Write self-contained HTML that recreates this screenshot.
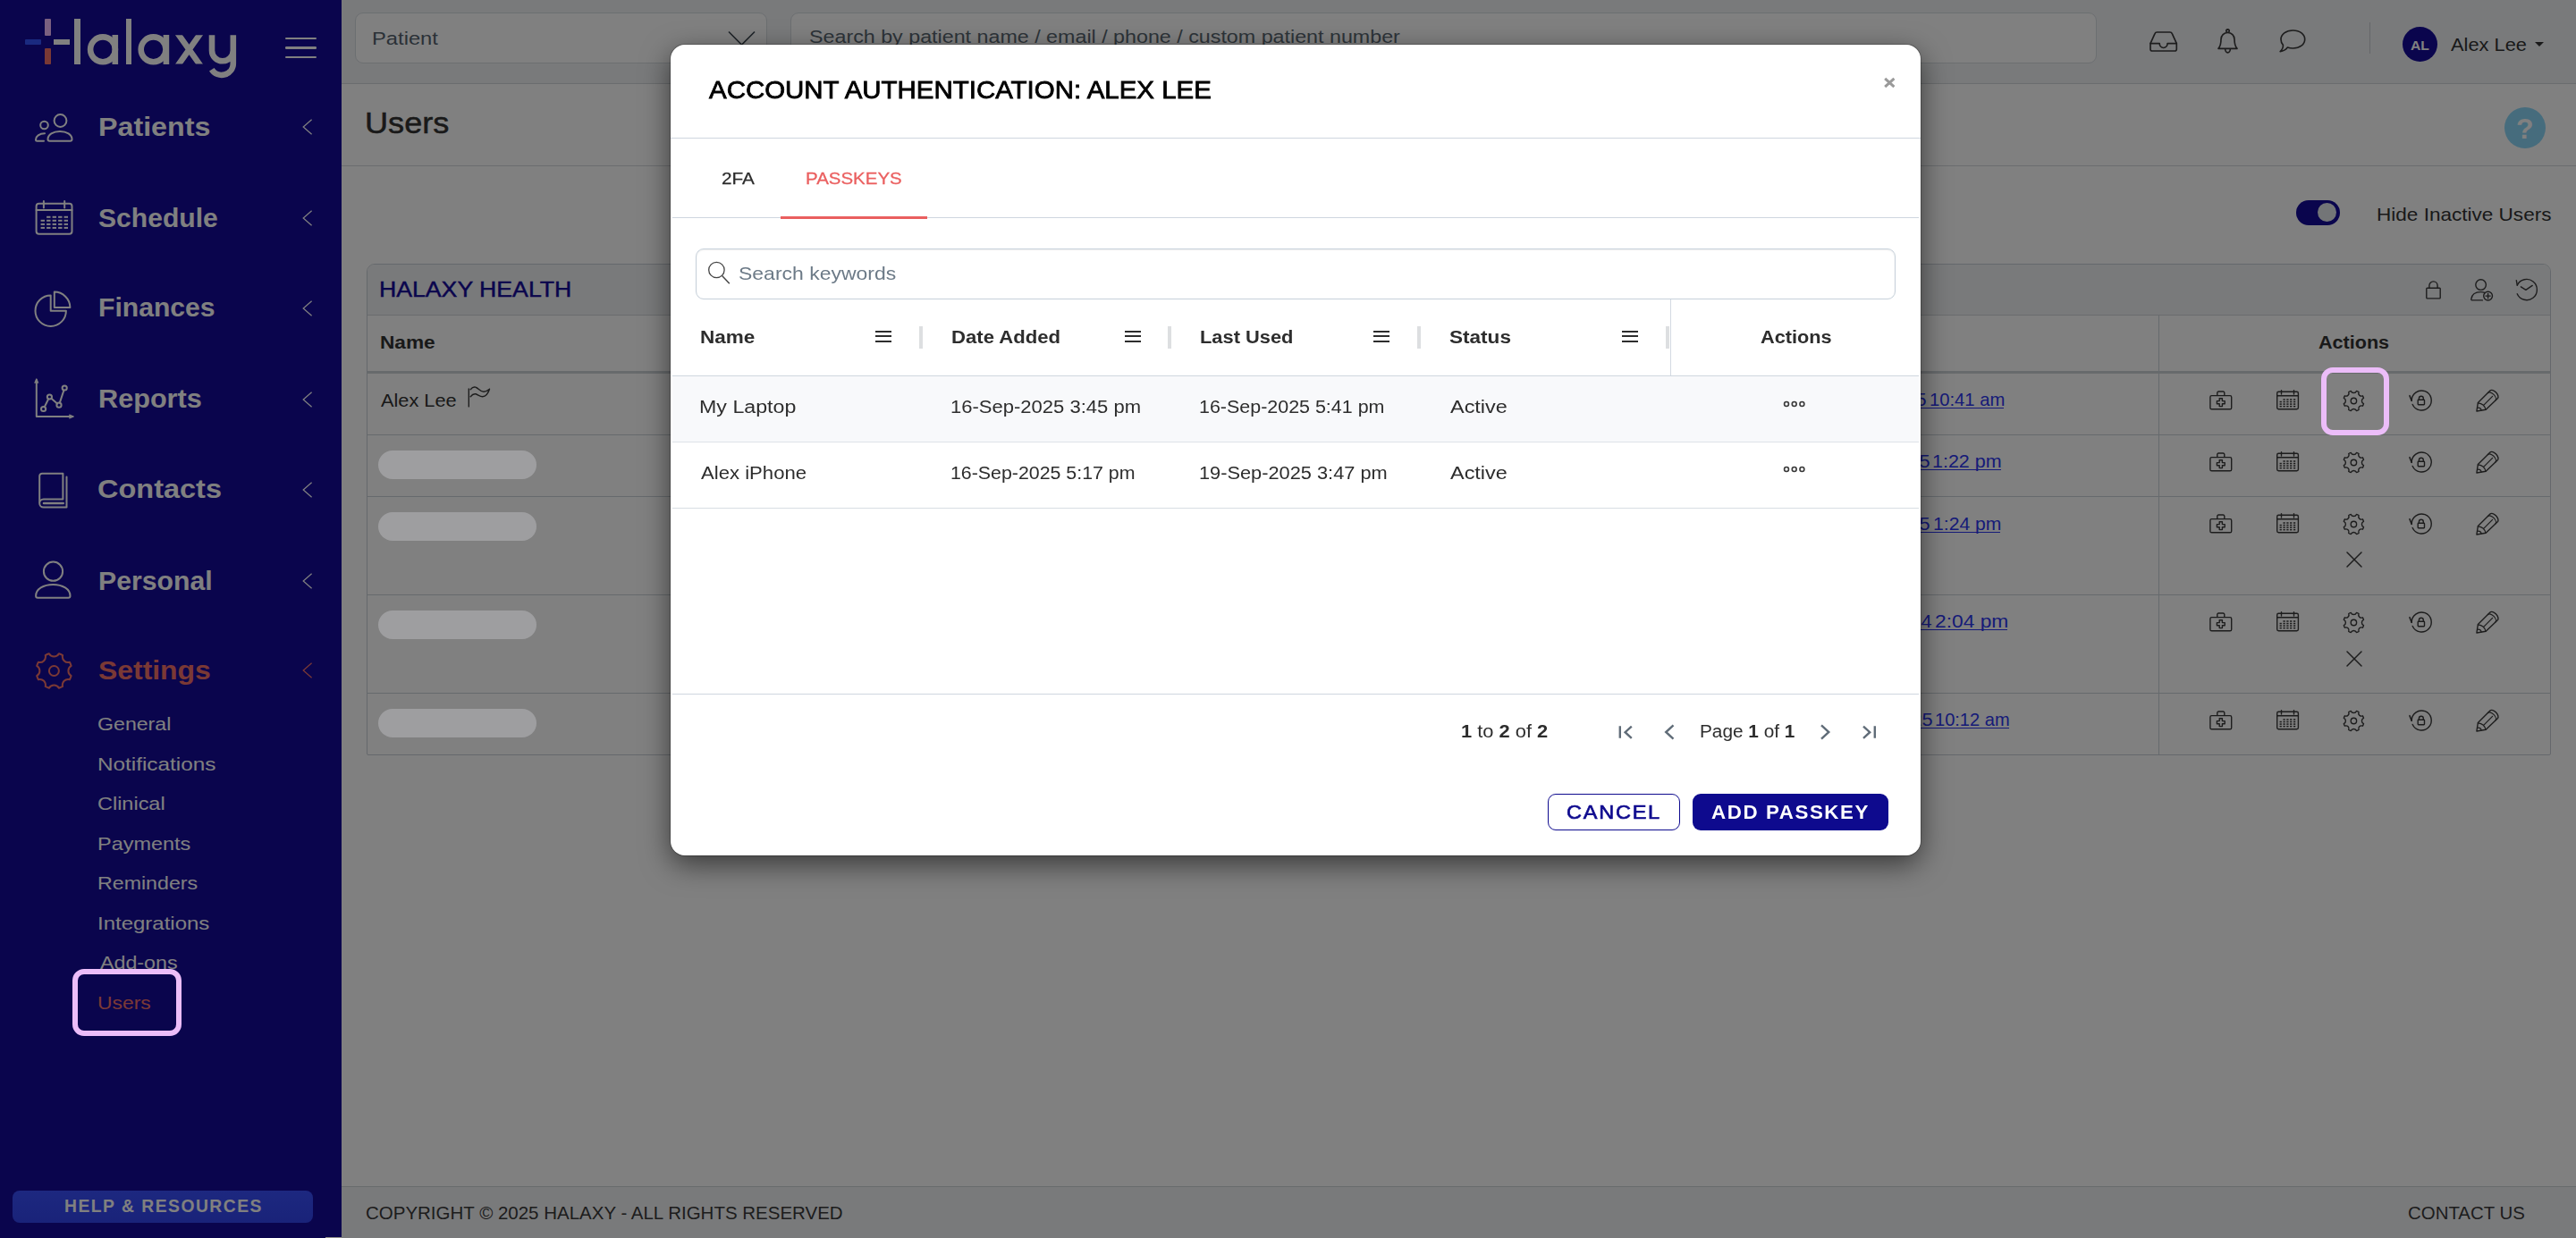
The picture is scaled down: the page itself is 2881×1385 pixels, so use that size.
<!DOCTYPE html>
<html lang="en"><head><meta charset="utf-8"><title>Users - Halaxy</title>
<style>
html,body{margin:0;padding:0;}
body{width:2881px;height:1385px;overflow:hidden;position:relative;background:#fff;font-family:"Liberation Sans", sans-serif;}
#bg,#ov,#top,#modal{position:absolute;left:0;top:0;width:2881px;height:1385px;overflow:hidden;}
#bg div,#bg svg,#top div,#top svg,#modal div,#modal svg{position:absolute;box-sizing:border-box;}
#ov{background:rgba(0,0,0,0.498);}
#modal{will-change:transform;}
.t{white-space:pre;transform-origin:0 0;}
svg{overflow:visible;}
</style></head><body>
<div id="bg">
<div style="left:0px;top:0px;width:382px;height:1385px;background:#140a9a;"></div>
<div style="left:50px;top:21px;width:6.7px;height:18.6px;background:#f4c0ff;border-radius:1px;"></div>
<div style="left:28px;top:43.5px;width:18.3px;height:6.2px;background:#3455ff;border-radius:1px;"></div>
<div style="left:50px;top:53.6px;width:6.7px;height:18.3px;background:#f4726a;border-radius:1px;"></div>
<div style="left:59.8px;top:43.5px;width:18px;height:6.2px;background:#fff;"></div>
<div style="left:83px;top:21px;width:6.8px;height:51px;background:#fff;"></div>
<div style="left:140.5px;top:21px;width:6.7px;height:51px;background:#fff;"></div>
<svg style="left:90px;top:20px;" width="190" height="75" viewBox="0 0 190 75" fill="none">
<defs><clipPath id="xc"><rect x="100" y="19.3" width="45" height="32.3"/></clipPath></defs>
<g stroke="#fff" stroke-width="6.6" fill="none">
<circle cx="25" cy="35.3" r="13.9"/><path d="M38.8 19 V52"/>
<circle cx="81.6" cy="35.3" r="13.9"/><path d="M95.9 19 V52"/>
<path clip-path="url(#xc)" d="M106.7 14.5 L136.3 56.4 M136.3 14.5 L106.7 56.4"/>
<path d="M147 19.3 V36.4 a11.9 11.9 0 0 0 23.8 0 M170.8 19.3 V50.9 A13 13 0 0 1 146.8 57.8"/>
</g></svg>
<div style="left:319.4px;top:42.0px;width:34.4px;height:2.4px;background:#fff;border-radius:1.2px;"></div>
<div style="left:319.4px;top:52.4px;width:34.4px;height:2.4px;background:#fff;border-radius:1.2px;"></div>
<div style="left:319.4px;top:62.89999999999999px;width:34.4px;height:2.4px;background:#fff;border-radius:1.2px;"></div>
<div class="t" style="left:109.65px;top:126.51px;font-size:30px;line-height:30px;color:#ffffff;font-weight:700;transform:scaleX(1.0740);">Patients</div>
<svg style="left:336px;top:132.1px;" width="16" height="20" viewBox="0 0 16 20" fill="none"><path d="M12.6 1.8 L3.2 10 L12.6 18.2" stroke="#ffffff" stroke-width="1.25"/></svg>
<div class="t" style="left:109.50px;top:228.60px;font-size:30px;line-height:30px;color:#ffffff;font-weight:700;transform:scaleX(1.0034);">Schedule</div>
<svg style="left:336px;top:234.2px;" width="16" height="20" viewBox="0 0 16 20" fill="none"><path d="M12.6 1.8 L3.2 10 L12.6 18.2" stroke="#ffffff" stroke-width="1.25"/></svg>
<div class="t" style="left:109.79px;top:329.21px;font-size:30px;line-height:30px;color:#ffffff;font-weight:700;transform:scaleX(1.0036);">Finances</div>
<svg style="left:336px;top:334.8px;" width="16" height="20" viewBox="0 0 16 20" fill="none"><path d="M12.6 1.8 L3.2 10 L12.6 18.2" stroke="#ffffff" stroke-width="1.25"/></svg>
<div class="t" style="left:109.76px;top:431.41px;font-size:30px;line-height:30px;color:#ffffff;font-weight:700;transform:scaleX(1.0213);">Reports</div>
<svg style="left:336px;top:437.0px;" width="16" height="20" viewBox="0 0 16 20" fill="none"><path d="M12.6 1.8 L3.2 10 L12.6 18.2" stroke="#ffffff" stroke-width="1.25"/></svg>
<div class="t" style="left:109.15px;top:532.31px;font-size:30px;line-height:30px;color:#ffffff;font-weight:700;transform:scaleX(1.0825);">Contacts</div>
<svg style="left:336px;top:537.9000000000001px;" width="16" height="20" viewBox="0 0 16 20" fill="none"><path d="M12.6 1.8 L3.2 10 L12.6 18.2" stroke="#ffffff" stroke-width="1.25"/></svg>
<div class="t" style="left:109.79px;top:634.50px;font-size:30px;line-height:30px;color:#ffffff;font-weight:700;transform:scaleX(1.0073);">Personal</div>
<svg style="left:336px;top:640.1px;" width="16" height="20" viewBox="0 0 16 20" fill="none"><path d="M12.6 1.8 L3.2 10 L12.6 18.2" stroke="#ffffff" stroke-width="1.25"/></svg>
<div class="t" style="left:109.54px;top:734.61px;font-size:30px;line-height:30px;color:#f4726a;font-weight:700;transform:scaleX(1.0632);">Settings</div>
<svg style="left:336px;top:740.2px;" width="16" height="20" viewBox="0 0 16 20" fill="none"><path d="M12.6 1.8 L3.2 10 L12.6 18.2" stroke="#f4726a" stroke-width="1.25"/></svg>
<div class="t" style="left:109.46px;top:800.32px;font-size:20.3px;line-height:20.3px;color:#ffffff;transform:scaleX(1.1412);">General</div>
<div class="t" style="left:108.90px;top:844.82px;font-size:20.3px;line-height:20.3px;color:#ffffff;transform:scaleX(1.1981);">Notifications</div>
<div class="t" style="left:109.44px;top:889.32px;font-size:20.3px;line-height:20.3px;color:#ffffff;transform:scaleX(1.1571);">Clinical</div>
<div class="t" style="left:108.98px;top:933.82px;font-size:20.3px;line-height:20.3px;color:#ffffff;transform:scaleX(1.1556);">Payments</div>
<div class="t" style="left:109.00px;top:978.32px;font-size:20.3px;line-height:20.3px;color:#ffffff;transform:scaleX(1.1435);">Reminders</div>
<div class="t" style="left:108.93px;top:1022.82px;font-size:20.3px;line-height:20.3px;color:#ffffff;transform:scaleX(1.1826);">Integrations</div>
<div class="t" style="left:111.50px;top:1067.32px;font-size:20.3px;line-height:20.3px;color:#ffffff;transform:scaleX(1.1465);">Add-ons</div>
<div class="t" style="left:109.31px;top:1111.82px;font-size:20.3px;line-height:20.3px;color:#f4726a;transform:scaleX(1.1271);">Users</div>
<div style="left:13.7px;top:1331.8px;width:336.5px;height:36.1px;background:linear-gradient(#3a50ff,#3346f2);border-radius:8px;"></div>
<div class="t" style="left:71.56px;top:1340.09px;font-size:19.5px;line-height:19.5px;color:#ffffff;font-weight:700;letter-spacing:1.5px;transform:scaleX(0.9905);">HELP &amp; RESOURCES</div>
<div style="left:382px;top:0px;width:2499px;height:93.5px;background:#f2f3f6;border-bottom:1px solid #d3d8dc;"></div>
<div style="left:396.5px;top:14.2px;width:461px;height:57.2px;background:#fff;border:1px solid #d8dde2;border-radius:9px;"></div>
<div class="t" style="left:416.17px;top:32.65px;font-size:20.5px;line-height:20.5px;color:#55626e;transform:scaleX(1.1581);">Patient</div>
<svg style="left:812px;top:33px;" width="36" height="22" viewBox="0 0 36 22" fill="none"><path d="M3 2.5 L17.5 17 L32 2.5" stroke="#3d4852" stroke-width="1.6"/></svg>
<div style="left:884.3px;top:14.2px;width:1461px;height:57.2px;background:#fff;border:1px solid #d8dde2;border-radius:9px;"></div>
<div class="t" style="left:905.47px;top:30.85px;font-size:20.5px;line-height:20.5px;color:#5b6873;transform:scaleX(1.1349);">Search by patient name / email / phone / custom patient number</div>
<div style="left:2650px;top:25px;width:1px;height:35px;background:#c9ced3;"></div>
<div style="left:2686.7px;top:30px;width:39.2px;height:39.2px;background:#140a9a;border-radius:50%;"></div>
<div class="t" style="left:2696.26px;top:43.73px;font-size:14.5px;line-height:14.5px;color:#fff;font-weight:700;transform:scaleX(1.0811);">AL</div>
<div class="t" style="left:2740.60px;top:40.02px;font-size:20.3px;line-height:20.3px;color:#333;transform:scaleX(1.0756);">Alex Lee</div>
<svg style="left:2835px;top:46.8px;" width="10" height="5" viewBox="0 0 10 5" fill="none"><path d="M0 0 H10 L5 5 Z" fill="#333"/></svg>
<div style="left:382px;top:94px;width:2499px;height:92px;background:#fff;border-bottom:1px solid #d5dade;"></div>
<div class="t" style="left:408.26px;top:121.07px;font-size:33px;line-height:33px;color:#333;transform:scaleX(1.0945);-webkit-text-stroke:0.5px #333;">Users</div>
<div style="left:2800.9px;top:119.8px;width:46px;height:46px;background:#8cd8fa;border-radius:50%;"></div>
<div class="t" style="left:2814.36px;top:128.76px;font-size:31px;line-height:31px;color:#fff;font-weight:700;transform:scaleX(1.0286);">?</div>
<div style="left:2567.8px;top:223.9px;width:49.2px;height:28px;background:#140a9a;border-radius:14px;"></div>
<div style="left:2591.9px;top:227.2px;width:21.3px;height:21.3px;background:#e6eaee;border-radius:50%;"></div>
<div class="t" style="left:2657.79px;top:230.54px;font-size:19.8px;line-height:19.8px;color:#333;transform:scaleX(1.1397);">Hide Inactive Users</div>
<div style="left:410.3px;top:295px;width:2442.5px;height:550px;background:#fff;border:1px solid #c9d0d7;border-radius:9px 9px 2px 2px;"></div>
<div style="left:411.3px;top:296px;width:2440.5px;height:56.5px;background:#f2f3f6;border-bottom:1px solid #d3d8dc;border-radius:8px 8px 0 0;"></div>
<div class="t" style="left:423.61px;top:312.15px;font-size:24.4px;line-height:24.4px;color:#140a9a;transform:scaleX(1.0927);-webkit-text-stroke:0.45px #140a9a;">HALAXY HEALTH</div>
<div class="t" style="left:424.70px;top:372.82px;font-size:20.3px;line-height:20.3px;color:#333;font-weight:700;transform:scaleX(1.1174);">Name</div>
<div class="t" style="left:2593.47px;top:373.12px;font-size:20.3px;line-height:20.3px;color:#333;font-weight:700;transform:scaleX(1.0630);">Actions</div>
<div style="left:411.3px;top:415px;width:2440.5px;height:3px;background:#cdd3d8;"></div>
<div style="left:2414px;top:353px;width:1px;height:491px;background:#ccd3da;"></div>
<div style="left:411.3px;top:486.1px;width:2440.5px;height:1px;background:#ccd3da;"></div>
<div style="left:411.3px;top:554.8px;width:2440.5px;height:1px;background:#ccd3da;"></div>
<div style="left:411.3px;top:664.6px;width:2440.5px;height:1px;background:#ccd3da;"></div>
<div style="left:411.3px;top:774.5px;width:2440.5px;height:1px;background:#ccd3da;"></div>
<div class="t" style="left:426.10px;top:437.52px;font-size:20.3px;line-height:20.3px;color:#333;transform:scaleX(1.0718);">Alex Lee</div>
<div class="t" style="left:2157.60px;top:437.42px;font-size:20.3px;line-height:20.3px;color:#2c36f0;transform:scaleX(0.9969);">10:41 am</div>
<div class="t" style="left:2098.93px;top:437.42px;font-size:20.3px;line-height:20.3px;color:#2c36f0;transform:scaleX(1.0700);">-2025</div>
<div style="left:2080px;top:456.3px;width:160.5999999999999px;height:1.2px;background:#2c36f0;"></div>
<div class="t" style="left:2161.41px;top:506.22px;font-size:20.3px;line-height:20.3px;color:#2c36f0;transform:scaleX(1.0596);">1:22 pm</div>
<div class="t" style="left:2102.83px;top:506.22px;font-size:20.3px;line-height:20.3px;color:#2c36f0;transform:scaleX(1.0700);">-2025</div>
<div style="left:2080px;top:525.1px;width:157.69999999999982px;height:1.2px;background:#2c36f0;"></div>
<div class="t" style="left:2161.94px;top:575.62px;font-size:20.3px;line-height:20.3px;color:#2c36f0;transform:scaleX(1.0426);">1:24 pm</div>
<div class="t" style="left:2103.33px;top:575.62px;font-size:20.3px;line-height:20.3px;color:#2c36f0;transform:scaleX(1.0700);">-2025</div>
<div style="left:2080px;top:594.5px;width:157px;height:1.2px;background:#2c36f0;"></div>
<div class="t" style="left:2163.88px;top:685.32px;font-size:20.3px;line-height:20.3px;color:#2c36f0;transform:scaleX(1.1225);">2:04 pm</div>
<div class="t" style="left:2104.56px;top:685.32px;font-size:20.3px;line-height:20.3px;color:#2c36f0;transform:scaleX(1.0700);">-2024</div>
<div style="left:2080px;top:704.2px;width:164.69999999999982px;height:1.2px;background:#2c36f0;"></div>
<div class="t" style="left:2164.22px;top:795.12px;font-size:20.3px;line-height:20.3px;color:#2c36f0;transform:scaleX(0.9884);">10:12 am</div>
<div class="t" style="left:2105.53px;top:795.12px;font-size:20.3px;line-height:20.3px;color:#2c36f0;transform:scaleX(1.0700);">-2025</div>
<div style="left:2080px;top:814.0px;width:166.5px;height:1.2px;background:#2c36f0;"></div>
<div style="left:382px;top:1326.5px;width:2499px;height:59px;background:#f2f3f6;border-top:1px solid #d0d5d9;"></div>
<div class="t" style="left:408.76px;top:1348.34px;font-size:19.8px;line-height:19.8px;color:#3a3a3a;transform:scaleX(1.0359);">COPYRIGHT © 2025 HALAXY - ALL RIGHTS RESERVED</div>
<div class="t" style="left:2692.67px;top:1348.34px;font-size:19.8px;line-height:19.8px;color:#3a3a3a;transform:scaleX(1.0325);">CONTACT US</div>
<svg style="left:38px;top:125px;" width="46" height="36" viewBox="0 0 46 36" fill="none"><g stroke="#fff" stroke-width="2.0" stroke-linecap="round" stroke-linejoin="round" fill="none"><circle cx="29.5" cy="10" r="6.9"/><circle cx="11.5" cy="15" r="4.3"/>
<path d="M17.5 32.7 H40.5 a2 2 0 0 0 2 -2 C42.5 25.5 36.5 22 29 22 C21.5 22 15.5 25.5 15.5 30.7 a2 2 0 0 0 2 2 Z"/>
<path d="M12 24.3 C6 24.3 2 27.5 2 31.2 a1.5 1.5 0 0 0 1.5 1.5 H11"/></g></svg>
<svg style="left:38px;top:224px;" width="46" height="40" viewBox="0 0 46 40" fill="none"><g stroke="#fff" stroke-width="2.0" stroke-linecap="round" stroke-linejoin="round" fill="none"><rect x="2.6" y="3.8" width="39.9" height="33.9" rx="3"/><path d="M10.9 1 V8.4 M34.2 1 V8.4 M2.6 11 H42.5"/><rect x="14.1" y="17.8" width="4.4" height="2" fill="#fff" stroke="none"/><rect x="20.6" y="17.8" width="4.4" height="2" fill="#fff" stroke="none"/><rect x="27.1" y="17.8" width="4.4" height="2" fill="#fff" stroke="none"/><rect x="33.6" y="17.8" width="4.4" height="2" fill="#fff" stroke="none"/><rect x="7.6" y="21.8" width="4.4" height="2" fill="#fff" stroke="none"/><rect x="14.1" y="21.8" width="4.4" height="2" fill="#fff" stroke="none"/><rect x="20.6" y="21.8" width="4.4" height="2" fill="#fff" stroke="none"/><rect x="27.1" y="21.8" width="4.4" height="2" fill="#fff" stroke="none"/><rect x="33.6" y="21.8" width="4.4" height="2" fill="#fff" stroke="none"/><rect x="7.6" y="25.9" width="4.4" height="2" fill="#fff" stroke="none"/><rect x="14.1" y="25.9" width="4.4" height="2" fill="#fff" stroke="none"/><rect x="20.6" y="25.9" width="4.4" height="2" fill="#fff" stroke="none"/><rect x="27.1" y="25.9" width="4.4" height="2" fill="#fff" stroke="none"/><rect x="33.6" y="25.9" width="4.4" height="2" fill="#fff" stroke="none"/><rect x="7.6" y="29.9" width="4.4" height="2" fill="#fff" stroke="none"/><rect x="14.1" y="29.9" width="4.4" height="2" fill="#fff" stroke="none"/><rect x="20.6" y="29.9" width="4.4" height="2" fill="#fff" stroke="none"/><rect x="27.1" y="29.9" width="4.4" height="2" fill="#fff" stroke="none"/><rect x="33.6" y="29.9" width="4.4" height="2" fill="#fff" stroke="none"/></g></svg>
<svg style="left:38px;top:324px;" width="44" height="44" viewBox="0 0 44 44" fill="none"><g stroke="#fff" stroke-width="2.0" stroke-linecap="round" stroke-linejoin="round" fill="none"><path d="M18.7 6.5 V23.7 H35.9 A17.2 17.2 0 1 1 18.7 6.5 Z"/><path d="M22.8 2.6 V20 H40.4 A17.6 17.6 0 0 0 22.8 2.6 Z"/></g></svg>
<svg style="left:38px;top:422px;" width="46" height="48" viewBox="0 0 46 48" fill="none"><g stroke="#fff" stroke-width="2.0" stroke-linecap="round" stroke-linejoin="round" fill="none"><path d="M2.8 3 V44 H43"/><path d="M0.8 6 L2.8 1.6 L4.8 6 Z M40 42 L44.6 44 L40 46 Z" fill="#fff" stroke-width="0.8"/>
<path d="M11.8 33.2 L16.2 24.3 M19.4 23.8 L26 29.5 M28.8 28.6 L33.4 14.6"/>
<circle cx="10.6" cy="35.5" r="2.6"/><circle cx="17.4" cy="22" r="2.6"/><circle cx="28" cy="31.2" r="2.6"/><circle cx="34.2" cy="12" r="2.6"/></g></svg>
<svg style="left:42px;top:527px;" width="36" height="44" viewBox="0 0 36 44" fill="none"><g stroke="#fff" stroke-width="2.0" stroke-linecap="round" stroke-linejoin="round" fill="none"><path d="M2.2 36 V5.7 a3 3 0 0 1 3 -3 H28.4 V31.5 H6.7 a4.5 4.5 0 0 0 0 9 H32.5 V6.6"/><path d="M7 36 H28.7" stroke-width="2.6"/></g></svg>
<svg style="left:38px;top:626px;" width="44" height="46" viewBox="0 0 44 46" fill="none"><g stroke="#fff" stroke-width="2.0" stroke-linecap="round" stroke-linejoin="round" fill="none"><circle cx="21.5" cy="13.2" r="10.6"/><path d="M4.1 42.7 H38.5 a2 2 0 0 0 2 -2 C40.5 33 32 27.9 21.3 27.9 C10.6 27.9 2.1 33 2.1 40.7 a2 2 0 0 0 2 2 Z"/></g></svg>
<svg style="left:38px;top:728px;" width="46" height="46" viewBox="0 0 46 46" fill="none"><g stroke="#f4726a" stroke-width="2.0" stroke-linecap="round" stroke-linejoin="round" fill="none"><path d="M27.91 3.27A20.00 20.00 0 0 1 32.10 5.01A6.32 6.32 0 0 0 39.89 12.80A20.00 20.00 0 0 1 41.63 16.99A6.32 6.32 0 0 0 41.63 28.01A20.00 20.00 0 0 1 39.89 32.20A6.32 6.32 0 0 0 32.10 39.99A20.00 20.00 0 0 1 27.91 41.73A6.32 6.32 0 0 0 16.89 41.73A20.00 20.00 0 0 1 12.70 39.99A6.32 6.32 0 0 0 4.91 32.20A20.00 20.00 0 0 1 3.17 28.01A6.32 6.32 0 0 0 3.17 16.99A20.00 20.00 0 0 1 4.91 12.80A6.32 6.32 0 0 0 12.70 5.01A20.00 20.00 0 0 1 16.89 3.27A6.32 6.32 0 0 0 27.91 3.27Z"/><circle cx="22.4" cy="22.5" r="5.5"/></g></svg>
<svg style="left:2402.7px;top:33.7px;" width="34" height="26" viewBox="0 0 34 26" fill="none"><g stroke="#3a3a3a" stroke-width="1.65" stroke-linecap="round" stroke-linejoin="round" fill="none"><path d="M2 14.6 L7 3.6 a2.6 2.6 0 0 1 2.4 -1.6 H23.9 a2.6 2.6 0 0 1 2.4 1.6 L31.3 14.6 V21 a2 2 0 0 1 -2 2 H4 a2 2 0 0 1 -2 -2 Z"/><path d="M2 14.6 H12.2 a4.45 4.9 0 0 0 8.9 0 H31.3"/></g></svg>
<svg style="left:2479px;top:30.9px;" width="26" height="30" viewBox="0 0 26 30" fill="none"><g stroke="#3a3a3a" stroke-width="1.65" stroke-linecap="round" stroke-linejoin="round" fill="none"><path d="M12.5 1.9 a1.7 1.7 0 0 1 0 3.4 a1.7 1.7 0 0 1 0 -3.4 M2 23.4 C5 20 5 17 5 13 a7.5 7.5 0 0 1 15 0 C20 17 20 20 23 23.4 Z M9.6 23.6 a2.9 4.2 0 0 0 5.8 0"/></g></svg>
<svg style="left:2548.3px;top:32.3px;" width="32" height="28" viewBox="0 0 32 28" fill="none"><g stroke="#3a3a3a" stroke-width="1.65" stroke-linecap="round" stroke-linejoin="round" fill="none"><path d="M16.4 2 C24.3 2 29.7 6.5 29.7 12 C29.7 17.8 24 22 16.4 22 C14.2 22 12.2 21.7 10.4 21 C8.4 23.6 5.4 25.2 2.2 25.6 C4.6 23.4 5.6 20.8 5.4 18.4 C3.6 16.6 3 14.4 3 12 C3 6.5 8.6 2 16.4 2 Z"/></g></svg>
<svg style="left:2711.8px;top:313.3px;" width="19" height="23" viewBox="0 0 19 23" fill="none"><g stroke="#3a3a3a" stroke-width="1.4" stroke-linecap="round" stroke-linejoin="round" fill="none"><rect x="1.8" y="9.3" width="15.4" height="11.6" rx="0.8"/><path d="M4.9 9.3 V6.5 a4.6 4.6 0 0 1 9.2 0 V9.3"/></g></svg>
<svg style="left:2762.2px;top:310.8px;" width="28" height="27" viewBox="0 0 28 27" fill="none"><g stroke="#3a3a3a" stroke-width="1.4" stroke-linecap="round" stroke-linejoin="round" fill="none"><circle cx="12.6" cy="7.6" r="5.8"/><path d="M14.4 24.9 H2.6 a1 1 0 0 1 -0.8 -1.2 C2.4 18.6 6.6 15.6 12.6 15.6 C14.2 15.6 15.6 15.9 16.8 16.3"/><circle cx="20.6" cy="20.1" r="4.9"/><path d="M20.6 17.5 V22.7 M18 20.1 H23.2"/></g></svg>
<svg style="left:2812.3px;top:310.8px;" width="27" height="27" viewBox="0 0 27 27" fill="none"><g stroke="#3a3a3a" stroke-width="1.4" stroke-linecap="round" stroke-linejoin="round" fill="none"><path d="M3.29 8.1 A11.6 11.6 0 1 1 3.21 17.8"/><path d="M2.3 2.7 L3.29 8.1"/><path d="M7.4 9.8 L12.9 13.3 L20.2 8.4"/></g></svg>
<svg style="left:522px;top:432px;" width="27" height="24" viewBox="0 0 27 24" fill="none"><g stroke="#3a3a3a" stroke-width="1.4" stroke-linecap="round" stroke-linejoin="round" fill="none"><path d="M2.3 3 V22.9"/><path d="M4.2 3.7 C6 1.5 8 0.6 10 1.2 C13 2 15 6.2 19 6.2 C21.5 6.2 23.5 5 25.5 3.3 M4.2 11.7 C6 9.5 8 8.3 10 8.8 C12.5 9.4 14.5 11.7 17.7 11.7 C21.5 11.7 24 8 25.5 3.3"/></g></svg>
<svg style="left:2470px;top:434.5px;" width="28" height="27" viewBox="0 0 28 27" fill="none"><g stroke="#3a3a3a" stroke-width="1.4" stroke-linecap="round" stroke-linejoin="round" fill="none"><rect x="1.9" y="7.6" width="23.8" height="15.2" rx="1.6"/><path d="M9.8 7.4 V4.4 a1.4 1.4 0 0 1 1.4 -1.4 H16.4 a1.4 1.4 0 0 1 1.4 1.4 V7.4"/><path d="M12.2 10.8 H15.4 V13.6 H18.2 V16.8 H15.4 V19.6 H12.2 V16.8 H9.4 V13.6 H12.2 Z"/></g></svg>
<svg style="left:2544.9px;top:434.5px;" width="28" height="27" viewBox="0 0 28 27" fill="none"><g stroke="#3a3a3a" stroke-width="1.4" stroke-linecap="round" stroke-linejoin="round" fill="none"><rect x="1.7" y="3.3" width="23.7" height="19.4" rx="1.6"/><path d="M6.5 1.6 V6 M20.5 1.6 V6 M1.7 7.8 H25.4"/><rect x="8.45" y="11.25" width="2.3" height="1.5" fill="#3a3a3a" stroke="none"/><rect x="12.25" y="11.25" width="2.3" height="1.5" fill="#3a3a3a" stroke="none"/><rect x="16.05" y="11.25" width="2.3" height="1.5" fill="#3a3a3a" stroke="none"/><rect x="19.95" y="11.25" width="2.3" height="1.5" fill="#3a3a3a" stroke="none"/><rect x="4.55" y="13.80" width="2.3" height="1.5" fill="#3a3a3a" stroke="none"/><rect x="8.45" y="13.80" width="2.3" height="1.5" fill="#3a3a3a" stroke="none"/><rect x="12.25" y="13.80" width="2.3" height="1.5" fill="#3a3a3a" stroke="none"/><rect x="16.05" y="13.80" width="2.3" height="1.5" fill="#3a3a3a" stroke="none"/><rect x="19.95" y="13.80" width="2.3" height="1.5" fill="#3a3a3a" stroke="none"/><rect x="4.55" y="16.35" width="2.3" height="1.5" fill="#3a3a3a" stroke="none"/><rect x="8.45" y="16.35" width="2.3" height="1.5" fill="#3a3a3a" stroke="none"/><rect x="12.25" y="16.35" width="2.3" height="1.5" fill="#3a3a3a" stroke="none"/><rect x="16.05" y="16.35" width="2.3" height="1.5" fill="#3a3a3a" stroke="none"/><rect x="19.95" y="16.35" width="2.3" height="1.5" fill="#3a3a3a" stroke="none"/><rect x="4.55" y="18.90" width="2.3" height="1.5" fill="#3a3a3a" stroke="none"/><rect x="8.45" y="18.90" width="2.3" height="1.5" fill="#3a3a3a" stroke="none"/><rect x="12.25" y="18.90" width="2.3" height="1.5" fill="#3a3a3a" stroke="none"/><rect x="16.05" y="18.90" width="2.3" height="1.5" fill="#3a3a3a" stroke="none"/><rect x="19.95" y="18.90" width="2.3" height="1.5" fill="#3a3a3a" stroke="none"/></g></svg>
<svg style="left:2619.4px;top:434.5px;" width="28" height="27" viewBox="0 0 28 27" fill="none"><g stroke="#3a3a3a" stroke-width="1.4" stroke-linecap="round" stroke-linejoin="round" fill="none"><path d="M16.47 2.42A11.50 11.50 0 0 1 19.06 3.49A3.31 3.31 0 0 0 23.41 7.84A11.50 11.50 0 0 1 24.48 10.43A3.31 3.31 0 0 0 24.48 16.57A11.50 11.50 0 0 1 23.41 19.16A3.31 3.31 0 0 0 19.06 23.51A11.50 11.50 0 0 1 16.47 24.58A3.31 3.31 0 0 0 10.33 24.58A11.50 11.50 0 0 1 7.74 23.51A3.31 3.31 0 0 0 3.39 19.16A11.50 11.50 0 0 1 2.32 16.57A3.31 3.31 0 0 0 2.32 10.43A11.50 11.50 0 0 1 3.39 7.84A3.31 3.31 0 0 0 7.74 3.49A11.50 11.50 0 0 1 10.33 2.42A3.31 3.31 0 0 0 16.47 2.42Z"/><circle cx="13.4" cy="13.5" r="3.2"/></g></svg>
<svg style="left:2693.9px;top:434.5px;" width="28" height="27" viewBox="0 0 28 27" fill="none"><g stroke="#3a3a3a" stroke-width="1.4" stroke-linecap="round" stroke-linejoin="round" fill="none"><path d="M3.25 13.4 A11 11 0 1 1 4.2 17.5"/><path d="M0.9 7.6 L3.2 13.4" stroke-width="1.5"/><rect x="10.2" y="12.3" width="7.3" height="5.4" rx="0.6"/><path d="M11.4 12.3 V10.7 a2.45 2.45 0 0 1 4.9 0 V12.3"/></g></svg>
<svg style="left:2768.8px;top:434.5px;" width="28" height="27" viewBox="0 0 28 27" fill="none"><g stroke="#3a3a3a" stroke-width="1.4" stroke-linecap="round" stroke-linejoin="round" fill="none"><path d="M0.9 25 L2.4 15.4 L15.9 2.1 A3.4 5.95 -44.5 0 1 24.3 10.7 L11.2 23.3 Z"/><path d="M8.9 18.2 L18.6 8.3 M13.4 4.6 A3.4 5.95 -44.5 0 1 21.8 13.1 M2.4 15.9 Q9.5 16.5 10.9 23.2 M1.7 21.3 Q5.3 20.6 6.1 23.9" stroke-width="1.2"/></g></svg>
<svg style="left:2470px;top:503.5px;" width="28" height="27" viewBox="0 0 28 27" fill="none"><g stroke="#3a3a3a" stroke-width="1.4" stroke-linecap="round" stroke-linejoin="round" fill="none"><rect x="1.9" y="7.6" width="23.8" height="15.2" rx="1.6"/><path d="M9.8 7.4 V4.4 a1.4 1.4 0 0 1 1.4 -1.4 H16.4 a1.4 1.4 0 0 1 1.4 1.4 V7.4"/><path d="M12.2 10.8 H15.4 V13.6 H18.2 V16.8 H15.4 V19.6 H12.2 V16.8 H9.4 V13.6 H12.2 Z"/></g></svg>
<svg style="left:2544.9px;top:503.5px;" width="28" height="27" viewBox="0 0 28 27" fill="none"><g stroke="#3a3a3a" stroke-width="1.4" stroke-linecap="round" stroke-linejoin="round" fill="none"><rect x="1.7" y="3.3" width="23.7" height="19.4" rx="1.6"/><path d="M6.5 1.6 V6 M20.5 1.6 V6 M1.7 7.8 H25.4"/><rect x="8.45" y="11.25" width="2.3" height="1.5" fill="#3a3a3a" stroke="none"/><rect x="12.25" y="11.25" width="2.3" height="1.5" fill="#3a3a3a" stroke="none"/><rect x="16.05" y="11.25" width="2.3" height="1.5" fill="#3a3a3a" stroke="none"/><rect x="19.95" y="11.25" width="2.3" height="1.5" fill="#3a3a3a" stroke="none"/><rect x="4.55" y="13.80" width="2.3" height="1.5" fill="#3a3a3a" stroke="none"/><rect x="8.45" y="13.80" width="2.3" height="1.5" fill="#3a3a3a" stroke="none"/><rect x="12.25" y="13.80" width="2.3" height="1.5" fill="#3a3a3a" stroke="none"/><rect x="16.05" y="13.80" width="2.3" height="1.5" fill="#3a3a3a" stroke="none"/><rect x="19.95" y="13.80" width="2.3" height="1.5" fill="#3a3a3a" stroke="none"/><rect x="4.55" y="16.35" width="2.3" height="1.5" fill="#3a3a3a" stroke="none"/><rect x="8.45" y="16.35" width="2.3" height="1.5" fill="#3a3a3a" stroke="none"/><rect x="12.25" y="16.35" width="2.3" height="1.5" fill="#3a3a3a" stroke="none"/><rect x="16.05" y="16.35" width="2.3" height="1.5" fill="#3a3a3a" stroke="none"/><rect x="19.95" y="16.35" width="2.3" height="1.5" fill="#3a3a3a" stroke="none"/><rect x="4.55" y="18.90" width="2.3" height="1.5" fill="#3a3a3a" stroke="none"/><rect x="8.45" y="18.90" width="2.3" height="1.5" fill="#3a3a3a" stroke="none"/><rect x="12.25" y="18.90" width="2.3" height="1.5" fill="#3a3a3a" stroke="none"/><rect x="16.05" y="18.90" width="2.3" height="1.5" fill="#3a3a3a" stroke="none"/><rect x="19.95" y="18.90" width="2.3" height="1.5" fill="#3a3a3a" stroke="none"/></g></svg>
<svg style="left:2619.4px;top:503.5px;" width="28" height="27" viewBox="0 0 28 27" fill="none"><g stroke="#3a3a3a" stroke-width="1.4" stroke-linecap="round" stroke-linejoin="round" fill="none"><path d="M16.47 2.42A11.50 11.50 0 0 1 19.06 3.49A3.31 3.31 0 0 0 23.41 7.84A11.50 11.50 0 0 1 24.48 10.43A3.31 3.31 0 0 0 24.48 16.57A11.50 11.50 0 0 1 23.41 19.16A3.31 3.31 0 0 0 19.06 23.51A11.50 11.50 0 0 1 16.47 24.58A3.31 3.31 0 0 0 10.33 24.58A11.50 11.50 0 0 1 7.74 23.51A3.31 3.31 0 0 0 3.39 19.16A11.50 11.50 0 0 1 2.32 16.57A3.31 3.31 0 0 0 2.32 10.43A11.50 11.50 0 0 1 3.39 7.84A3.31 3.31 0 0 0 7.74 3.49A11.50 11.50 0 0 1 10.33 2.42A3.31 3.31 0 0 0 16.47 2.42Z"/><circle cx="13.4" cy="13.5" r="3.2"/></g></svg>
<svg style="left:2693.9px;top:503.5px;" width="28" height="27" viewBox="0 0 28 27" fill="none"><g stroke="#3a3a3a" stroke-width="1.4" stroke-linecap="round" stroke-linejoin="round" fill="none"><path d="M3.25 13.4 A11 11 0 1 1 4.2 17.5"/><path d="M0.9 7.6 L3.2 13.4" stroke-width="1.5"/><rect x="10.2" y="12.3" width="7.3" height="5.4" rx="0.6"/><path d="M11.4 12.3 V10.7 a2.45 2.45 0 0 1 4.9 0 V12.3"/></g></svg>
<svg style="left:2768.8px;top:503.5px;" width="28" height="27" viewBox="0 0 28 27" fill="none"><g stroke="#3a3a3a" stroke-width="1.4" stroke-linecap="round" stroke-linejoin="round" fill="none"><path d="M0.9 25 L2.4 15.4 L15.9 2.1 A3.4 5.95 -44.5 0 1 24.3 10.7 L11.2 23.3 Z"/><path d="M8.9 18.2 L18.6 8.3 M13.4 4.6 A3.4 5.95 -44.5 0 1 21.8 13.1 M2.4 15.9 Q9.5 16.5 10.9 23.2 M1.7 21.3 Q5.3 20.6 6.1 23.9" stroke-width="1.2"/></g></svg>
<svg style="left:2470px;top:572.9px;" width="28" height="27" viewBox="0 0 28 27" fill="none"><g stroke="#3a3a3a" stroke-width="1.4" stroke-linecap="round" stroke-linejoin="round" fill="none"><rect x="1.9" y="7.6" width="23.8" height="15.2" rx="1.6"/><path d="M9.8 7.4 V4.4 a1.4 1.4 0 0 1 1.4 -1.4 H16.4 a1.4 1.4 0 0 1 1.4 1.4 V7.4"/><path d="M12.2 10.8 H15.4 V13.6 H18.2 V16.8 H15.4 V19.6 H12.2 V16.8 H9.4 V13.6 H12.2 Z"/></g></svg>
<svg style="left:2544.9px;top:572.9px;" width="28" height="27" viewBox="0 0 28 27" fill="none"><g stroke="#3a3a3a" stroke-width="1.4" stroke-linecap="round" stroke-linejoin="round" fill="none"><rect x="1.7" y="3.3" width="23.7" height="19.4" rx="1.6"/><path d="M6.5 1.6 V6 M20.5 1.6 V6 M1.7 7.8 H25.4"/><rect x="8.45" y="11.25" width="2.3" height="1.5" fill="#3a3a3a" stroke="none"/><rect x="12.25" y="11.25" width="2.3" height="1.5" fill="#3a3a3a" stroke="none"/><rect x="16.05" y="11.25" width="2.3" height="1.5" fill="#3a3a3a" stroke="none"/><rect x="19.95" y="11.25" width="2.3" height="1.5" fill="#3a3a3a" stroke="none"/><rect x="4.55" y="13.80" width="2.3" height="1.5" fill="#3a3a3a" stroke="none"/><rect x="8.45" y="13.80" width="2.3" height="1.5" fill="#3a3a3a" stroke="none"/><rect x="12.25" y="13.80" width="2.3" height="1.5" fill="#3a3a3a" stroke="none"/><rect x="16.05" y="13.80" width="2.3" height="1.5" fill="#3a3a3a" stroke="none"/><rect x="19.95" y="13.80" width="2.3" height="1.5" fill="#3a3a3a" stroke="none"/><rect x="4.55" y="16.35" width="2.3" height="1.5" fill="#3a3a3a" stroke="none"/><rect x="8.45" y="16.35" width="2.3" height="1.5" fill="#3a3a3a" stroke="none"/><rect x="12.25" y="16.35" width="2.3" height="1.5" fill="#3a3a3a" stroke="none"/><rect x="16.05" y="16.35" width="2.3" height="1.5" fill="#3a3a3a" stroke="none"/><rect x="19.95" y="16.35" width="2.3" height="1.5" fill="#3a3a3a" stroke="none"/><rect x="4.55" y="18.90" width="2.3" height="1.5" fill="#3a3a3a" stroke="none"/><rect x="8.45" y="18.90" width="2.3" height="1.5" fill="#3a3a3a" stroke="none"/><rect x="12.25" y="18.90" width="2.3" height="1.5" fill="#3a3a3a" stroke="none"/><rect x="16.05" y="18.90" width="2.3" height="1.5" fill="#3a3a3a" stroke="none"/><rect x="19.95" y="18.90" width="2.3" height="1.5" fill="#3a3a3a" stroke="none"/></g></svg>
<svg style="left:2619.4px;top:572.9px;" width="28" height="27" viewBox="0 0 28 27" fill="none"><g stroke="#3a3a3a" stroke-width="1.4" stroke-linecap="round" stroke-linejoin="round" fill="none"><path d="M16.47 2.42A11.50 11.50 0 0 1 19.06 3.49A3.31 3.31 0 0 0 23.41 7.84A11.50 11.50 0 0 1 24.48 10.43A3.31 3.31 0 0 0 24.48 16.57A11.50 11.50 0 0 1 23.41 19.16A3.31 3.31 0 0 0 19.06 23.51A11.50 11.50 0 0 1 16.47 24.58A3.31 3.31 0 0 0 10.33 24.58A11.50 11.50 0 0 1 7.74 23.51A3.31 3.31 0 0 0 3.39 19.16A11.50 11.50 0 0 1 2.32 16.57A3.31 3.31 0 0 0 2.32 10.43A11.50 11.50 0 0 1 3.39 7.84A3.31 3.31 0 0 0 7.74 3.49A11.50 11.50 0 0 1 10.33 2.42A3.31 3.31 0 0 0 16.47 2.42Z"/><circle cx="13.4" cy="13.5" r="3.2"/></g></svg>
<svg style="left:2693.9px;top:572.9px;" width="28" height="27" viewBox="0 0 28 27" fill="none"><g stroke="#3a3a3a" stroke-width="1.4" stroke-linecap="round" stroke-linejoin="round" fill="none"><path d="M3.25 13.4 A11 11 0 1 1 4.2 17.5"/><path d="M0.9 7.6 L3.2 13.4" stroke-width="1.5"/><rect x="10.2" y="12.3" width="7.3" height="5.4" rx="0.6"/><path d="M11.4 12.3 V10.7 a2.45 2.45 0 0 1 4.9 0 V12.3"/></g></svg>
<svg style="left:2768.8px;top:572.9px;" width="28" height="27" viewBox="0 0 28 27" fill="none"><g stroke="#3a3a3a" stroke-width="1.4" stroke-linecap="round" stroke-linejoin="round" fill="none"><path d="M0.9 25 L2.4 15.4 L15.9 2.1 A3.4 5.95 -44.5 0 1 24.3 10.7 L11.2 23.3 Z"/><path d="M8.9 18.2 L18.6 8.3 M13.4 4.6 A3.4 5.95 -44.5 0 1 21.8 13.1 M2.4 15.9 Q9.5 16.5 10.9 23.2 M1.7 21.3 Q5.3 20.6 6.1 23.9" stroke-width="1.2"/></g></svg>
<svg style="left:2470px;top:683.1px;" width="28" height="27" viewBox="0 0 28 27" fill="none"><g stroke="#3a3a3a" stroke-width="1.4" stroke-linecap="round" stroke-linejoin="round" fill="none"><rect x="1.9" y="7.6" width="23.8" height="15.2" rx="1.6"/><path d="M9.8 7.4 V4.4 a1.4 1.4 0 0 1 1.4 -1.4 H16.4 a1.4 1.4 0 0 1 1.4 1.4 V7.4"/><path d="M12.2 10.8 H15.4 V13.6 H18.2 V16.8 H15.4 V19.6 H12.2 V16.8 H9.4 V13.6 H12.2 Z"/></g></svg>
<svg style="left:2544.9px;top:683.1px;" width="28" height="27" viewBox="0 0 28 27" fill="none"><g stroke="#3a3a3a" stroke-width="1.4" stroke-linecap="round" stroke-linejoin="round" fill="none"><rect x="1.7" y="3.3" width="23.7" height="19.4" rx="1.6"/><path d="M6.5 1.6 V6 M20.5 1.6 V6 M1.7 7.8 H25.4"/><rect x="8.45" y="11.25" width="2.3" height="1.5" fill="#3a3a3a" stroke="none"/><rect x="12.25" y="11.25" width="2.3" height="1.5" fill="#3a3a3a" stroke="none"/><rect x="16.05" y="11.25" width="2.3" height="1.5" fill="#3a3a3a" stroke="none"/><rect x="19.95" y="11.25" width="2.3" height="1.5" fill="#3a3a3a" stroke="none"/><rect x="4.55" y="13.80" width="2.3" height="1.5" fill="#3a3a3a" stroke="none"/><rect x="8.45" y="13.80" width="2.3" height="1.5" fill="#3a3a3a" stroke="none"/><rect x="12.25" y="13.80" width="2.3" height="1.5" fill="#3a3a3a" stroke="none"/><rect x="16.05" y="13.80" width="2.3" height="1.5" fill="#3a3a3a" stroke="none"/><rect x="19.95" y="13.80" width="2.3" height="1.5" fill="#3a3a3a" stroke="none"/><rect x="4.55" y="16.35" width="2.3" height="1.5" fill="#3a3a3a" stroke="none"/><rect x="8.45" y="16.35" width="2.3" height="1.5" fill="#3a3a3a" stroke="none"/><rect x="12.25" y="16.35" width="2.3" height="1.5" fill="#3a3a3a" stroke="none"/><rect x="16.05" y="16.35" width="2.3" height="1.5" fill="#3a3a3a" stroke="none"/><rect x="19.95" y="16.35" width="2.3" height="1.5" fill="#3a3a3a" stroke="none"/><rect x="4.55" y="18.90" width="2.3" height="1.5" fill="#3a3a3a" stroke="none"/><rect x="8.45" y="18.90" width="2.3" height="1.5" fill="#3a3a3a" stroke="none"/><rect x="12.25" y="18.90" width="2.3" height="1.5" fill="#3a3a3a" stroke="none"/><rect x="16.05" y="18.90" width="2.3" height="1.5" fill="#3a3a3a" stroke="none"/><rect x="19.95" y="18.90" width="2.3" height="1.5" fill="#3a3a3a" stroke="none"/></g></svg>
<svg style="left:2619.4px;top:683.1px;" width="28" height="27" viewBox="0 0 28 27" fill="none"><g stroke="#3a3a3a" stroke-width="1.4" stroke-linecap="round" stroke-linejoin="round" fill="none"><path d="M16.47 2.42A11.50 11.50 0 0 1 19.06 3.49A3.31 3.31 0 0 0 23.41 7.84A11.50 11.50 0 0 1 24.48 10.43A3.31 3.31 0 0 0 24.48 16.57A11.50 11.50 0 0 1 23.41 19.16A3.31 3.31 0 0 0 19.06 23.51A11.50 11.50 0 0 1 16.47 24.58A3.31 3.31 0 0 0 10.33 24.58A11.50 11.50 0 0 1 7.74 23.51A3.31 3.31 0 0 0 3.39 19.16A11.50 11.50 0 0 1 2.32 16.57A3.31 3.31 0 0 0 2.32 10.43A11.50 11.50 0 0 1 3.39 7.84A3.31 3.31 0 0 0 7.74 3.49A11.50 11.50 0 0 1 10.33 2.42A3.31 3.31 0 0 0 16.47 2.42Z"/><circle cx="13.4" cy="13.5" r="3.2"/></g></svg>
<svg style="left:2693.9px;top:683.1px;" width="28" height="27" viewBox="0 0 28 27" fill="none"><g stroke="#3a3a3a" stroke-width="1.4" stroke-linecap="round" stroke-linejoin="round" fill="none"><path d="M3.25 13.4 A11 11 0 1 1 4.2 17.5"/><path d="M0.9 7.6 L3.2 13.4" stroke-width="1.5"/><rect x="10.2" y="12.3" width="7.3" height="5.4" rx="0.6"/><path d="M11.4 12.3 V10.7 a2.45 2.45 0 0 1 4.9 0 V12.3"/></g></svg>
<svg style="left:2768.8px;top:683.1px;" width="28" height="27" viewBox="0 0 28 27" fill="none"><g stroke="#3a3a3a" stroke-width="1.4" stroke-linecap="round" stroke-linejoin="round" fill="none"><path d="M0.9 25 L2.4 15.4 L15.9 2.1 A3.4 5.95 -44.5 0 1 24.3 10.7 L11.2 23.3 Z"/><path d="M8.9 18.2 L18.6 8.3 M13.4 4.6 A3.4 5.95 -44.5 0 1 21.8 13.1 M2.4 15.9 Q9.5 16.5 10.9 23.2 M1.7 21.3 Q5.3 20.6 6.1 23.9" stroke-width="1.2"/></g></svg>
<svg style="left:2470px;top:793.1px;" width="28" height="27" viewBox="0 0 28 27" fill="none"><g stroke="#3a3a3a" stroke-width="1.4" stroke-linecap="round" stroke-linejoin="round" fill="none"><rect x="1.9" y="7.6" width="23.8" height="15.2" rx="1.6"/><path d="M9.8 7.4 V4.4 a1.4 1.4 0 0 1 1.4 -1.4 H16.4 a1.4 1.4 0 0 1 1.4 1.4 V7.4"/><path d="M12.2 10.8 H15.4 V13.6 H18.2 V16.8 H15.4 V19.6 H12.2 V16.8 H9.4 V13.6 H12.2 Z"/></g></svg>
<svg style="left:2544.9px;top:793.1px;" width="28" height="27" viewBox="0 0 28 27" fill="none"><g stroke="#3a3a3a" stroke-width="1.4" stroke-linecap="round" stroke-linejoin="round" fill="none"><rect x="1.7" y="3.3" width="23.7" height="19.4" rx="1.6"/><path d="M6.5 1.6 V6 M20.5 1.6 V6 M1.7 7.8 H25.4"/><rect x="8.45" y="11.25" width="2.3" height="1.5" fill="#3a3a3a" stroke="none"/><rect x="12.25" y="11.25" width="2.3" height="1.5" fill="#3a3a3a" stroke="none"/><rect x="16.05" y="11.25" width="2.3" height="1.5" fill="#3a3a3a" stroke="none"/><rect x="19.95" y="11.25" width="2.3" height="1.5" fill="#3a3a3a" stroke="none"/><rect x="4.55" y="13.80" width="2.3" height="1.5" fill="#3a3a3a" stroke="none"/><rect x="8.45" y="13.80" width="2.3" height="1.5" fill="#3a3a3a" stroke="none"/><rect x="12.25" y="13.80" width="2.3" height="1.5" fill="#3a3a3a" stroke="none"/><rect x="16.05" y="13.80" width="2.3" height="1.5" fill="#3a3a3a" stroke="none"/><rect x="19.95" y="13.80" width="2.3" height="1.5" fill="#3a3a3a" stroke="none"/><rect x="4.55" y="16.35" width="2.3" height="1.5" fill="#3a3a3a" stroke="none"/><rect x="8.45" y="16.35" width="2.3" height="1.5" fill="#3a3a3a" stroke="none"/><rect x="12.25" y="16.35" width="2.3" height="1.5" fill="#3a3a3a" stroke="none"/><rect x="16.05" y="16.35" width="2.3" height="1.5" fill="#3a3a3a" stroke="none"/><rect x="19.95" y="16.35" width="2.3" height="1.5" fill="#3a3a3a" stroke="none"/><rect x="4.55" y="18.90" width="2.3" height="1.5" fill="#3a3a3a" stroke="none"/><rect x="8.45" y="18.90" width="2.3" height="1.5" fill="#3a3a3a" stroke="none"/><rect x="12.25" y="18.90" width="2.3" height="1.5" fill="#3a3a3a" stroke="none"/><rect x="16.05" y="18.90" width="2.3" height="1.5" fill="#3a3a3a" stroke="none"/><rect x="19.95" y="18.90" width="2.3" height="1.5" fill="#3a3a3a" stroke="none"/></g></svg>
<svg style="left:2619.4px;top:793.1px;" width="28" height="27" viewBox="0 0 28 27" fill="none"><g stroke="#3a3a3a" stroke-width="1.4" stroke-linecap="round" stroke-linejoin="round" fill="none"><path d="M16.47 2.42A11.50 11.50 0 0 1 19.06 3.49A3.31 3.31 0 0 0 23.41 7.84A11.50 11.50 0 0 1 24.48 10.43A3.31 3.31 0 0 0 24.48 16.57A11.50 11.50 0 0 1 23.41 19.16A3.31 3.31 0 0 0 19.06 23.51A11.50 11.50 0 0 1 16.47 24.58A3.31 3.31 0 0 0 10.33 24.58A11.50 11.50 0 0 1 7.74 23.51A3.31 3.31 0 0 0 3.39 19.16A11.50 11.50 0 0 1 2.32 16.57A3.31 3.31 0 0 0 2.32 10.43A11.50 11.50 0 0 1 3.39 7.84A3.31 3.31 0 0 0 7.74 3.49A11.50 11.50 0 0 1 10.33 2.42A3.31 3.31 0 0 0 16.47 2.42Z"/><circle cx="13.4" cy="13.5" r="3.2"/></g></svg>
<svg style="left:2693.9px;top:793.1px;" width="28" height="27" viewBox="0 0 28 27" fill="none"><g stroke="#3a3a3a" stroke-width="1.4" stroke-linecap="round" stroke-linejoin="round" fill="none"><path d="M3.25 13.4 A11 11 0 1 1 4.2 17.5"/><path d="M0.9 7.6 L3.2 13.4" stroke-width="1.5"/><rect x="10.2" y="12.3" width="7.3" height="5.4" rx="0.6"/><path d="M11.4 12.3 V10.7 a2.45 2.45 0 0 1 4.9 0 V12.3"/></g></svg>
<svg style="left:2768.8px;top:793.1px;" width="28" height="27" viewBox="0 0 28 27" fill="none"><g stroke="#3a3a3a" stroke-width="1.4" stroke-linecap="round" stroke-linejoin="round" fill="none"><path d="M0.9 25 L2.4 15.4 L15.9 2.1 A3.4 5.95 -44.5 0 1 24.3 10.7 L11.2 23.3 Z"/><path d="M8.9 18.2 L18.6 8.3 M13.4 4.6 A3.4 5.95 -44.5 0 1 21.8 13.1 M2.4 15.9 Q9.5 16.5 10.9 23.2 M1.7 21.3 Q5.3 20.6 6.1 23.9" stroke-width="1.2"/></g></svg>
<svg style="left:2624px;top:617.4px;" width="18" height="18" viewBox="0 0 18 18" fill="none"><g stroke="#3a3a3a" stroke-width="1.5" stroke-linecap="round" stroke-linejoin="round" fill="none"><path d="M1 1 L17 17 M17 1 L1 17"/></g></svg>
<svg style="left:2624px;top:728px;" width="18" height="18" viewBox="0 0 18 18" fill="none"><g stroke="#3a3a3a" stroke-width="1.5" stroke-linecap="round" stroke-linejoin="round" fill="none"><path d="M1 1 L17 17 M17 1 L1 17"/></g></svg>
</div>
<div id="ov"></div>
<div id="top">
<div style="left:81px;top:1084px;width:122px;height:75px;border:6px solid #ecbdf9;border-radius:13px;"></div>
<div style="left:2596px;top:411px;width:76px;height:76px;border:6px solid #ecbdf9;border-radius:13px;"></div>
<div style="left:422.9px;top:504px;width:177.3px;height:31.5px;background:#9e9ea0;border-radius:16px;"></div>
<div style="left:422.9px;top:573.1px;width:177.3px;height:31.5px;background:#9e9ea0;border-radius:16px;"></div>
<div style="left:422.9px;top:683px;width:177.3px;height:31.5px;background:#9e9ea0;border-radius:16px;"></div>
<div style="left:422.9px;top:793.2px;width:177.3px;height:31.5px;background:#9e9ea0;border-radius:16px;"></div>
<div style="left:364px;top:1384px;width:18px;height:1px;background:#94948c;"></div>
</div>
<div id="modal">
<div style="left:750px;top:49.6px;width:1398px;height:907.4px;background:#fff;border-radius:16px;box-shadow:0 0 0 1px rgba(0,0,0,0.22),0 10px 32px rgba(0,0,0,0.56);"></div>
<div class="t" style="left:793.40px;top:87.34px;font-size:27.6px;line-height:27.6px;color:#000;transform:scaleX(1.0673);-webkit-text-stroke:0.8px #000;">ACCOUNT AUTHENTICATION: ALEX LEE</div>
<svg style="left:2107px;top:87px;" width="13" height="11" viewBox="0 0 13 11" fill="none"><path d="M1.2 0.8 L11.4 10.2 M11.4 0.8 L1.2 10.2" stroke="#9a9a9a" stroke-width="3"/></svg>
<div style="left:750px;top:154px;width:1398px;height:1px;background:#cfd6df;"></div>
<div class="t" style="left:807.09px;top:190.87px;font-size:18.7px;line-height:18.7px;color:#2b2b2b;transform:scaleX(1.1101);-webkit-text-stroke:0.25px #2b2b2b;">2FA</div>
<div class="t" style="left:901.06px;top:190.87px;font-size:18.7px;line-height:18.7px;color:#ea5f5f;transform:scaleX(1.0958);-webkit-text-stroke:0.3px #ea5f5f;">PASSKEYS</div>
<div style="left:752px;top:242.6px;width:1394px;height:1px;background:#cfd6df;"></div>
<div style="left:873.2px;top:242px;width:164.3px;height:3px;background:#ea5f5f;"></div>
<div style="left:778.2px;top:278px;width:1341.5px;height:56.7px;background:#fff;border:1px solid #c6d0da;border-radius:9px;box-shadow:inset 0 1px 2px rgba(0,0,0,0.07);"></div>
<svg style="left:790px;top:291px;" width="30" height="30" viewBox="0 0 30 30" fill="none"><circle cx="11.4" cy="11" r="8.7" stroke="#444" stroke-width="1.3"/><path d="M17.6 17.4 L25.8 26.3" stroke="#444" stroke-width="1.5"/></svg>
<div class="t" style="left:826.20px;top:295.79px;font-size:20.8px;line-height:20.8px;color:#6c7a87;transform:scaleX(1.1049);">Search keywords</div>
<div class="t" style="left:782.91px;top:367.32px;font-size:20.3px;line-height:20.3px;color:#2d2d2d;font-weight:700;transform:scaleX(1.1117);">Name</div>
<div style="left:979.1px;top:369.6px;width:18.2px;height:2px;background:#2d2d2d;"></div>
<div style="left:979.1px;top:375.1px;width:18.2px;height:2px;background:#2d2d2d;"></div>
<div style="left:979.1px;top:380.6px;width:18.2px;height:2px;background:#2d2d2d;"></div>
<div style="left:1028px;top:365.4px;width:3.6px;height:24.4px;background:#dddfe1;"></div>
<div class="t" style="left:1064.34px;top:367.32px;font-size:20.3px;line-height:20.3px;color:#2d2d2d;font-weight:700;transform:scaleX(1.0911);">Date Added</div>
<div style="left:1257.5px;top:369.6px;width:18.2px;height:2px;background:#2d2d2d;"></div>
<div style="left:1257.5px;top:375.1px;width:18.2px;height:2px;background:#2d2d2d;"></div>
<div style="left:1257.5px;top:380.6px;width:18.2px;height:2px;background:#2d2d2d;"></div>
<div style="left:1306.3px;top:365.4px;width:3.6px;height:24.4px;background:#dddfe1;"></div>
<div class="t" style="left:1342.35px;top:367.32px;font-size:20.3px;line-height:20.3px;color:#2d2d2d;font-weight:700;transform:scaleX(1.0769);">Last Used</div>
<div style="left:1535.7px;top:369.6px;width:18.2px;height:2px;background:#2d2d2d;"></div>
<div style="left:1535.7px;top:375.1px;width:18.2px;height:2px;background:#2d2d2d;"></div>
<div style="left:1535.7px;top:380.6px;width:18.2px;height:2px;background:#2d2d2d;"></div>
<div style="left:1585.2px;top:365.4px;width:3.6px;height:24.4px;background:#dddfe1;"></div>
<div class="t" style="left:1620.77px;top:367.32px;font-size:20.3px;line-height:20.3px;color:#2d2d2d;font-weight:700;transform:scaleX(1.1124);">Status</div>
<div style="left:1814px;top:369.6px;width:18.2px;height:2px;background:#2d2d2d;"></div>
<div style="left:1814px;top:375.1px;width:18.2px;height:2px;background:#2d2d2d;"></div>
<div style="left:1814px;top:380.6px;width:18.2px;height:2px;background:#2d2d2d;"></div>
<div style="left:1863px;top:365.4px;width:3.6px;height:24.4px;background:#dddfe1;"></div>
<div style="left:1868.3px;top:335px;width:1px;height:86px;background:#d3d9e2;"></div>
<div class="t" style="left:1968.86px;top:367.32px;font-size:20.3px;line-height:20.3px;color:#2d2d2d;font-weight:700;transform:scaleX(1.0712);">Actions</div>
<div style="left:752px;top:420px;width:1394px;height:1px;background:#cfd6df;"></div>
<div style="left:752px;top:421px;width:1394px;height:73.3px;background:#f8f9fb;"></div>
<div style="left:752px;top:494px;width:1394px;height:1px;background:#dde2e8;"></div>
<div style="left:752px;top:567.5px;width:1394px;height:1.4px;background:#d8dde3;"></div>
<div class="t" style="left:781.67px;top:444.97px;font-size:20px;line-height:20px;color:#2d2d2d;transform:scaleX(1.1603);">My Laptop</div>
<div class="t" style="left:1063.15px;top:444.97px;font-size:20px;line-height:20px;color:#2d2d2d;transform:scaleX(1.1014);">16-Sep-2025 3:45 pm</div>
<div class="t" style="left:1341.19px;top:444.97px;font-size:20px;line-height:20px;color:#2d2d2d;transform:scaleX(1.0721);">16-Sep-2025 5:41 pm</div>
<div class="t" style="left:1621.60px;top:444.97px;font-size:20px;line-height:20px;color:#2d2d2d;transform:scaleX(1.1720);">Active</div>
<div class="t" style="left:783.60px;top:519.17px;font-size:20px;line-height:20px;color:#2d2d2d;transform:scaleX(1.1064);">Alex iPhone</div>
<div class="t" style="left:1063.20px;top:519.17px;font-size:20px;line-height:20px;color:#2d2d2d;transform:scaleX(1.0674);">16-Sep-2025 5:17 pm</div>
<div class="t" style="left:1341.17px;top:519.17px;font-size:20px;line-height:20px;color:#2d2d2d;transform:scaleX(1.0889);">19-Sep-2025 3:47 pm</div>
<div class="t" style="left:1621.60px;top:519.17px;font-size:20px;line-height:20px;color:#2d2d2d;transform:scaleX(1.1720);">Active</div>
<svg style="left:1992.5px;top:447.7px;" width="28" height="8" viewBox="0 0 28 8" fill="none"><g stroke="#3a3a3a" stroke-width="1.6"><circle cx="5" cy="4" r="2.45"/><circle cx="13.7" cy="4" r="2.45"/><circle cx="22.4" cy="4" r="2.45"/></g></svg>
<svg style="left:1992.5px;top:521.4px;" width="28" height="8" viewBox="0 0 28 8" fill="none"><g stroke="#3a3a3a" stroke-width="1.6"><circle cx="5" cy="4" r="2.45"/><circle cx="13.7" cy="4" r="2.45"/><circle cx="22.4" cy="4" r="2.45"/></g></svg>
<div style="left:752px;top:775.6px;width:1394px;height:1px;background:#cfd6df;"></div>
<div class="t" style="left:1634.23px;top:808.07px;font-size:20px;line-height:20px;color:#2d2d2d;transform:scaleX(1.0931);"><b>1</b> to <b>2</b> of <b>2</b></div>
<div class="t" style="left:1900.68px;top:808.07px;font-size:20px;line-height:20px;color:#2d2d2d;transform:scaleX(1.0400);">Page <b>1</b> of <b>1</b></div>
<svg style="left:0px;top:0px;" width="10" height="10" viewBox="0 0 10 10" fill="none"><path d="M1811.8 812.2 V825.8 M1824.8 812.6 L1817.6 819.2 L1824.8 825.8" stroke="#606c78" stroke-width="2.4"/></svg>
<svg style="left:0px;top:0px;" width="10" height="10" viewBox="0 0 10 10" fill="none"><path d="M1871.5 811.3 L1863.2 819 L1871.5 826.7" stroke="#606c78" stroke-width="2.4"/></svg>
<svg style="left:0px;top:0px;" width="10" height="10" viewBox="0 0 10 10" fill="none"><path d="M2037 811.3 L2045.3 819 L2037 826.7" stroke="#606c78" stroke-width="2.4"/></svg>
<svg style="left:0px;top:0px;" width="10" height="10" viewBox="0 0 10 10" fill="none"><path d="M2084 812.6 L2091.2 819.2 L2084 825.8 M2096.8 812.2 V825.8" stroke="#606c78" stroke-width="2.4"/></svg>
<div style="left:1731.2px;top:888.2px;width:147.6px;height:40.8px;background:#fff;border:1.5px solid #0e0a8e;border-radius:9px;"></div>
<div class="t" style="left:1752.49px;top:897.95px;font-size:21.2px;line-height:21.2px;color:#0e0a8e;letter-spacing:1.6px;transform:scaleX(1.1089);-webkit-text-stroke:0.65px #0e0a8e;">CANCEL</div>
<div style="left:1893px;top:888.2px;width:219px;height:40.8px;background:#0e0a8e;border-radius:9px;"></div>
<div class="t" style="left:1914.07px;top:897.95px;font-size:21.2px;line-height:21.2px;color:#fff;font-weight:700;letter-spacing:1.5px;transform:scaleX(1.0538);">ADD PASSKEY</div>
</div>
</body></html>
